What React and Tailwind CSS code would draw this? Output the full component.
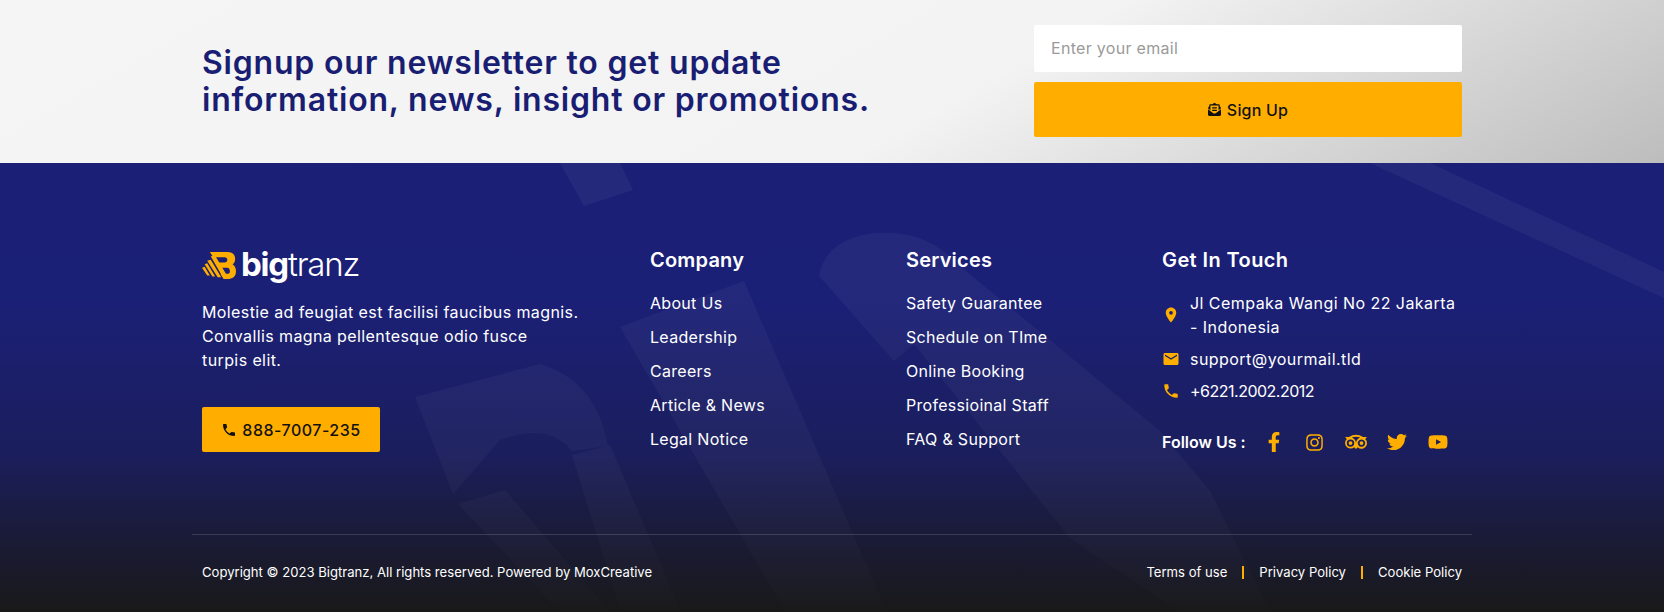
import React from 'react';
import { MdLocationOn, MdEmail, MdPhone } from 'react-icons/md';
import { FaEnvelopeOpenText, FaFacebookF, FaInstagram, FaTripadvisor, FaTwitter, FaYoutube } from 'react-icons/fa';

const company = ['About Us', 'Leadership', 'Careers', 'Article & News', 'Legal Notice'];
const services = ['Safety Guarantee', 'Schedule on TIme', 'Online Booking', 'Professioinal Staff', 'FAQ & Support'];
const socials = [
  { icon: FaFacebookF, size: 20 },
  { icon: FaInstagram, size: 19 },
  { icon: FaTripadvisor, size: 22 },
  { icon: FaTwitter, size: 20 },
  { icon: FaYoutube, size: 20 },
];
const legal = ['Terms of use', 'Privacy Policy', 'Cookie Policy'];

function Logo() {
  return (
    <div className="flex items-center h-[37px]">
      <svg width="34" height="29" viewBox="0 0 39 33" className="shrink-0 -mt-[3px]">
        <path d="M9 1H29c6 0 9 3 9 8 0 3-1 5-3 6 2 1 4 4 4 8 0 6-4 9-10 9h-4L21 26h8c2 0 3-1 3-3s-1-4-3-4h-8l-4-6h9c2 0 3-1 3-3s-1-3-3-3H13z" fill="#ffae00" />
        <path d="M10 6l5-1 16 27h-6zM6 11l4-1 12 20h-4zM3 15l3-1 9 15h-3zM0 19l3-1 6 10H6z" fill="#ffae00" />
      </svg>
      <span className="ml-[5px] text-[33px] leading-none tracking-[-1.2px] text-white font-bold -mt-1">big<span className="font-light">tranz</span></span>
    </div>
  );
}

function LinkColumn({ title, items }) {
  return (
    <div className="px-[10px]">
      <h4 className="text-[20px] leading-[30px] font-semibold text-white tracking-[0.2px]">{title}</h4>
      <ul className="mt-4 flex flex-col gap-[10px]">
        {items.map((item) => (
          <li key={item} className="leading-6 text-white tracking-[0.3px]">{item}</li>
        ))}
      </ul>
    </div>
  );
}

function RoadMarks() {
  return (
    <svg className="absolute inset-0 w-full h-full" viewBox="0 163 1664 449" preserveAspectRatio="none">
      <defs>
        <linearGradient id="fade" gradientUnits="userSpaceOnUse" x1="0" y1="163" x2="0" y2="612">
          <stop offset="0" stopColor="#fff" stopOpacity="0.045" />
          <stop offset="0.7" stopColor="#fff" stopOpacity="0.03" />
          <stop offset="1" stopColor="#fff" stopOpacity="0.005" />
        </linearGradient>
      </defs>
      <g fill="url(#fade)">
        <path d="M560 163h60l13 27-49 16z" />
        <path d="M1370 163h60l234 109v26z" />
        <path d="M819 276c6-34 41-44 66-43 30-1 55 12 70 29l205 169 50 60 60 121h-90l-110-74-156-194-20 17z" />
        <path d="M620 327l124-46 146 339H790z" />
        <path d="M415 397l125-33c40 12 60 40 68 82l-36 5c-17-21-42-22-72-11l-47 54z" />
        <path d="M458 504l47-14 105 122h-50z" />
        <path d="M572 455l38-10 70 165h-60z" />
      </g>
    </svg>
  );
}

export default function App() {
  return (
    <div className="font-['Inter','Open_Sans',sans-serif] text-base">
      {/* Newsletter */}
      <section className="h-[163px] bg-[linear-gradient(150deg,#f5f5f5_0%,#f3f3f3_58%,#bdbdbd_100%)]">
        <div className="w-[1280px] mx-auto px-[10px] flex items-start justify-between">
          <h2 className="pt-[44px] text-[32px] leading-[37px] font-semibold text-[#191e73] tracking-[0.8px]">
            Signup our newsletter to get update<br />information, news, insight or promotions.
          </h2>
          <div className="w-[428px] pt-[25px] flex flex-col gap-[10px]">
            <input
              placeholder="Enter your email"
              className="h-[47px] bg-white rounded-[2px] px-[17px] pb-[2px] outline-none text-[16px] tracking-[0.3px] placeholder:text-[#9a9a9a]"
            />
            <button className="h-[55px] bg-[#ffae00] rounded-[2px] flex items-center justify-center gap-[6px] font-medium tracking-[0.2px] text-[#111]">
              <FaEnvelopeOpenText size={13} />
              Sign Up
            </button>
          </div>
        </div>
      </section>

      {/* Footer */}
      <footer className="relative h-[449px] overflow-hidden bg-[linear-gradient(180deg,#1b1f75_0%,#1b2077_30%,#1b1e5c_65%,#1a1b38_83%,#191919_100%)]">
        <RoadMarks />
        <div className="relative w-[1280px] mx-auto">
          <div className="grid grid-cols-[448px_256px_256px_320px] pt-[82px] h-[371px]">
            <div className="px-[10px] pt-[3px]">
              <Logo />
              <p className="mt-[15px] leading-6 text-white tracking-[0.4px]">
                Molestie ad feugiat est facilisi faucibus magnis.<br />Convallis magna pellentesque odio fusce<br />turpis elit.
              </p>
              <a className="mt-[35px] w-[178px] h-[45px] bg-[#ffae00] rounded-[2px] flex items-center justify-center gap-[5px] font-medium tracking-[0.5px] text-[#111]">
                <MdPhone size={16} />
                888-7007-235
              </a>
            </div>
            <LinkColumn title="Company" items={company} />
            <LinkColumn title="Services" items={services} />
            <div className="px-[10px]">
              <h4 className="text-[20px] leading-[30px] font-semibold text-white tracking-[0.4px]">Get In Touch</h4>
              <div className="mt-4 flex items-center gap-[10px] text-white tracking-[0.45px] leading-6">
                <MdLocationOn size={18} className="text-[#ffae00] shrink-0" />
                <span>Jl Cempaka Wangi No 22 Jakarta<br />- Indonesia</span>
              </div>
              <div className="mt-[8px] flex items-center gap-[10px] text-white tracking-[0.45px] leading-6">
                <MdEmail size={18} className="text-[#ffae00] shrink-0" />
                <span>support@yourmail.tld</span>
              </div>
              <div className="mt-[8px] flex items-center gap-[10px] text-white tracking-[-0.5px] leading-6">
                <MdPhone size={18} className="text-[#ffae00] shrink-0" />
                <span>+6221.2002.2012</span>
              </div>
              <div className="mt-[27px] flex items-center h-6">
                <span className="font-semibold text-white w-[91px]">Follow Us :</span>
                <div className="flex items-center text-[#ffae00]">
                  {socials.map(({ icon: Icon, size }, i) => (
                    <span key={i} className="w-[41px] flex justify-center">
                      <Icon size={size} />
                    </span>
                  ))}
                </div>
              </div>
            </div>
          </div>
          <div className="border-t border-white/15 px-[10px] pt-[25px] flex items-center justify-between text-[13.1px] leading-6 text-white">
            <span>Copyright © 2023 Bigtranz, All rights reserved. Powered by MoxCreative</span>
            <div className="flex items-center">
              {legal.map((item, i) => (
                <React.Fragment key={item}>
                  {i > 0 && <span className="w-[2px] h-[13px] bg-[#ffae00] mx-[15px]" />}
                  <span>{item}</span>
                </React.Fragment>
              ))}
            </div>
          </div>
        </div>
      </footer>
    </div>
  );
}
